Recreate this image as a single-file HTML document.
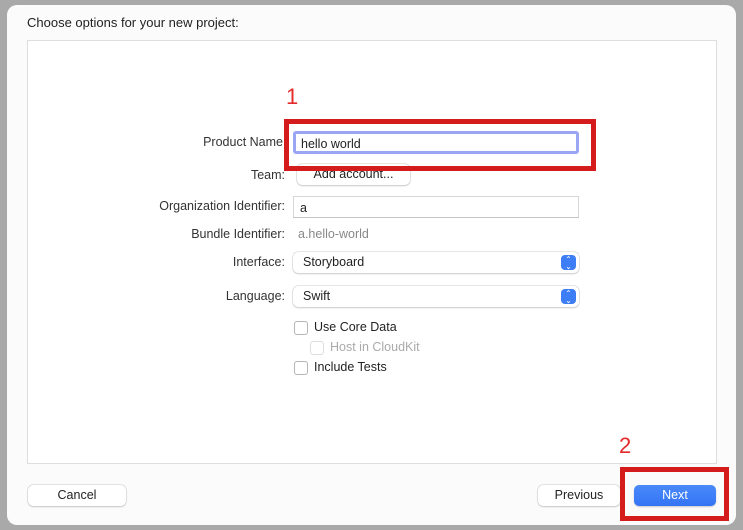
<!DOCTYPE html>
<html><head><style>
*{margin:0;padding:0;box-sizing:border-box}
body{width:743px;height:530px;background:#a9a9a9;font-family:"Liberation Sans",sans-serif;font-size:12.5px;color:#222;position:relative;overflow:hidden}
.win{position:absolute;left:7px;top:5px;width:729px;height:520px;background:#fbfbfb;border-radius:10px}
.a{position:absolute}
.panel{position:absolute;left:27px;top:40px;width:690px;height:424px;background:#fff;border:1px solid #dedede}
.lbl{position:absolute;text-align:right;width:200px;font-size:12.5px;color:#333}
.field{position:absolute;left:293px;width:286px;height:22px;background:#fff;border:1px solid #d6d6d6;border-bottom-color:#c4c4c4;padding:4px 6px;font-size:12.5px}
.pop{position:absolute;left:293px;width:286px;height:21px;background:#fff;border-radius:5px;box-shadow:0 0 0 .5px #ccc,0 1px 1.5px rgba(0,0,0,.2);padding:3px 10px;font-size:12.5px}
.pop i{position:absolute;right:3px;top:3px;width:15px;height:15px;border-radius:4px;background:#3d7df6;color:#fff;font-style:normal;font-size:8px;line-height:7px;text-align:center;padding-top:1px}
.cb{position:absolute;width:14px;height:14px;border:1px solid #b5b5b5;border-radius:3px;background:#fff}
.btn{position:absolute;height:21px;background:#fff;border-radius:5px;box-shadow:0 0 0 .5px #c8c8c8,0 1px 1.5px rgba(0,0,0,.2);text-align:center;line-height:21px;font-size:12.5px}
.red{position:absolute;border:5px solid #d41c1c}
.num{position:absolute;color:#e42a2a;font-size:22px}
</style></head><body>
<div class="win"></div>
<div class="a" style="left:27px;top:15px;font-size:13px">Choose options for your new project:</div>
<div class="panel"></div>
<div class="num" style="left:286px;top:84px">1</div>
<div class="lbl" style="left:83px;top:135px">Product Name</div>
<div class="field" style="top:131px;height:23px;border:3px solid #9aa6f3;border-radius:3px;padding:3px 5px">hello world</div>
<div class="lbl" style="left:85px;top:168px">Team:</div>
<div class="btn" style="left:297px;top:164px;width:113px">Add account...</div>
<div class="lbl" style="left:85px;top:199px">Organization Identifier:</div>
<div class="field" style="top:196px">a</div>
<div class="lbl" style="left:85px;top:227px">Bundle Identifier:</div>
<div class="a" style="left:298px;top:227px;color:#888;font-size:12.5px">a.hello-world</div>
<div class="lbl" style="left:85px;top:255px">Interface:</div>
<div class="pop" style="top:252px">Storyboard<i>⌃<br>⌄</i></div>
<div class="lbl" style="left:85px;top:289px">Language:</div>
<div class="pop" style="top:286px">Swift<i>⌃<br>⌄</i></div>
<div class="cb" style="left:294px;top:321px"></div><div class="a" style="left:314px;top:320px">Use Core Data</div>
<div class="cb" style="left:310px;top:341px;border-color:#ddd"></div><div class="a" style="left:330px;top:340px;color:#aaa">Host in CloudKit</div>
<div class="cb" style="left:294px;top:361px"></div><div class="a" style="left:314px;top:360px">Include Tests</div>
<div class="red" style="left:284px;top:119px;width:312px;height:52px"></div>
<div class="num" style="left:619px;top:433px">2</div>
<div class="btn" style="left:28px;top:485px;width:98px">Cancel</div>
<div class="btn" style="left:538px;top:485px;width:82px">Previous</div>
<div class="btn" style="left:634px;top:485px;width:82px;background:linear-gradient(#4a8af9,#3474f5);color:#fff;box-shadow:0 1px 1.5px rgba(0,0,0,.2)">Next</div>
<div class="red" style="left:620px;top:467px;width:109px;height:54px"></div>
</body></html>
